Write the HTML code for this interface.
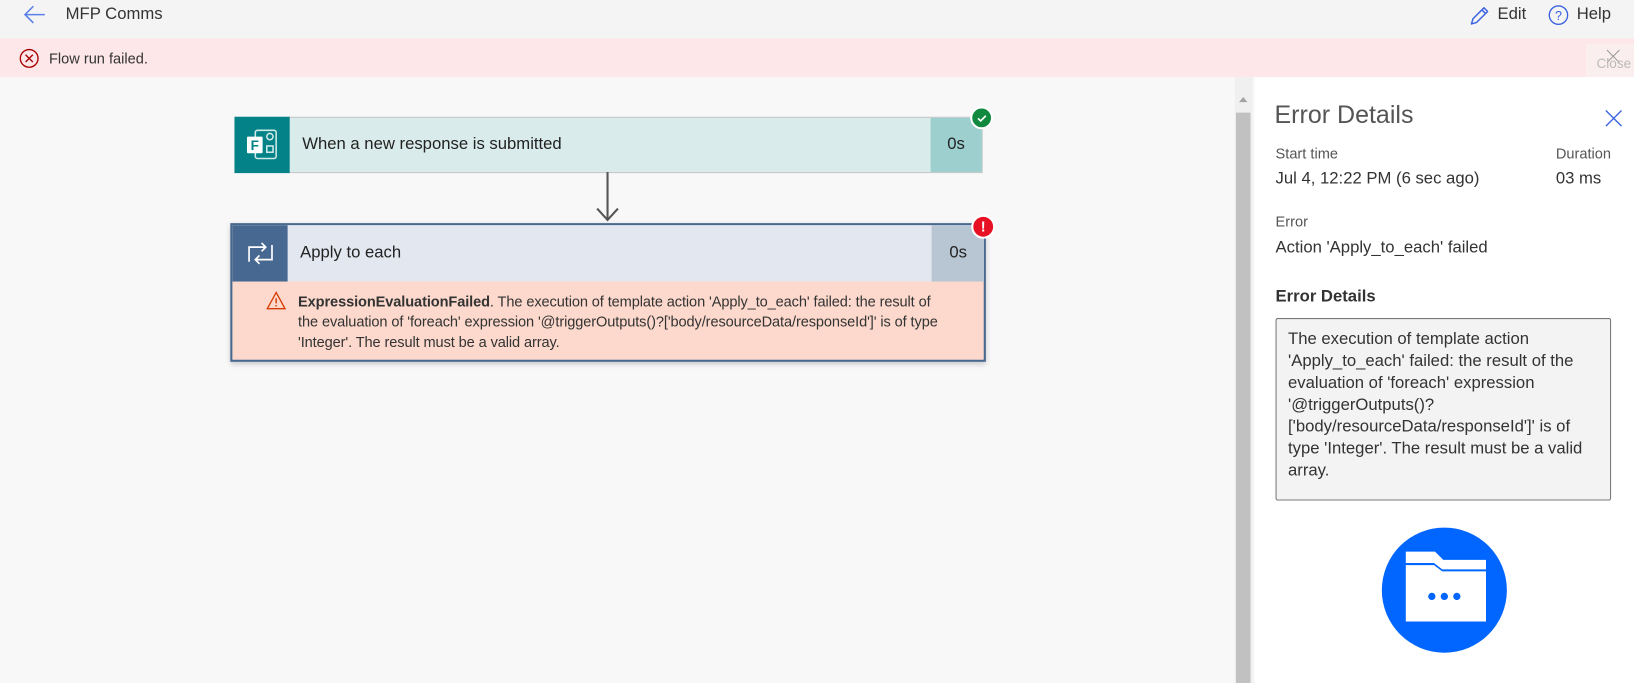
<!DOCTYPE html>
<html><head><meta charset="utf-8"><style>
html,body{margin:0;padding:0;width:1634px;height:683px;overflow:hidden;background:#f8f8f8;font-family:"Segoe UI","Liberation Sans",sans-serif;}
#w{position:absolute;left:0;top:0;width:1568px;height:655px;transform:scale(1.0421,1.0427);transform-origin:0 0;background:#f8f8f8;}
.a{position:absolute;}
.t{position:absolute;white-space:nowrap;}
</style></head><body><div id="w">
<div class="a" style="left:0;top:0;width:1568px;height:37px;background:#f4f4f4"></div>
<svg class="a" style="left:21px;top:4px" width="24" height="20" viewBox="0 0 24 20"><path d="M22 10H3M11 2L3 10l8 8" fill="none" stroke="#5b7fe8" stroke-width="1.5"/></svg>
<div class="t" style="left:63px;top:5px;font-size:16px;color:#333">MFP Comms</div>
<svg class="a" style="left:1409px;top:4px" width="22" height="22" viewBox="0 0 22 22"><path d="M3 19l1.5-5L15 3.5l3.5 3.5L8 17.5z M13 5.5l3.5 3.5 M3 19l5-1.5" fill="none" stroke="#3a62e0" stroke-width="1.4" stroke-linejoin="round"/></svg>
<div class="t" style="left:1437px;top:5px;font-size:16px;color:#333">Edit</div>
<svg class="a" style="left:1485px;top:4px" width="21" height="21" viewBox="0 0 21 21"><circle cx="10.5" cy="10.5" r="8.8" fill="none" stroke="#3a62e0" stroke-width="1.3"/><text x="10.5" y="15" text-anchor="middle" font-size="12" fill="#3a62e0" font-family="Liberation Sans">?</text></svg>
<div class="t" style="left:1513px;top:5px;font-size:16px;color:#333">Help</div>
<div class="a" style="left:0;top:37px;width:1568px;height:37px;background:#fde7e9"></div>
<svg class="a" style="left:18px;top:46px" width="20" height="20" viewBox="0 0 20 20"><circle cx="10" cy="10" r="8.5" fill="none" stroke="#a80000" stroke-width="1.3"/><path d="M6.5 6.5l7 7M13.5 6.5l-7 7" stroke="#a80000" stroke-width="1.3"/></svg>
<div class="t" style="left:47px;top:48px;font-size:14px;color:#333">Flow run failed.</div>
<div class="a" style="left:1522px;top:42px;width:46px;height:40px;background:#fbeeee;opacity:.9"></div>
<svg class="a" style="left:1541px;top:47px" width="14" height="14" viewBox="0 0 14 14"><path d="M1 1l12 12M13 1L1 13" stroke="#999" stroke-width="1"/></svg>
<div class="t" style="left:1532px;top:53px;font-size:13px;color:#bbb">Close</div>
<div class="a" style="left:1185px;top:74px;width:17px;height:581px;background:#f0f0f0"></div>
<div class="a" style="left:1186px;top:108px;width:14px;height:547px;background:#c1c1c1"></div>
<svg class="a" style="left:1188px;top:92px" width="10" height="8"><path d="M1 6l4-5 4 5z" fill="#a3a3a3"/></svg>
<div class="a" style="left:1204px;top:74px;width:364px;height:581px;background:#fff"></div>
<div class="t" style="left:1223px;top:97px;font-size:24px;font-weight:300;color:#555">Error Details</div>
<svg class="a" style="left:1540px;top:105px" width="17" height="17" viewBox="0 0 17 17"><path d="M1 1l15 15M16 1L1 16" stroke="#3a62e0" stroke-width="1.3"/></svg>
<div class="t" style="left:1224px;top:139px;font-size:14px;color:#555">Start time</div>
<div class="t" style="left:1493px;top:139px;font-size:14px;color:#555">Duration</div>
<div class="t" style="left:1224px;top:163px;font-size:16px;color:#333">Jul 4, 12:22 PM (6 sec ago)</div>
<div class="t" style="left:1493px;top:163px;font-size:16px;color:#333">03 ms</div>
<div class="t" style="left:1224px;top:204px;font-size:14px;color:#555">Error</div>
<div class="t" style="left:1224px;top:229px;font-size:16px;color:#333">Action 'Apply_to_each' failed</div>
<div class="t" style="left:1224px;top:276px;font-size:16px;font-weight:bold;color:#333">Error Details</div>
<div class="a" style="left:1224px;top:305px;width:322px;height:175px;background:#f3f3f3;border:1px solid #777;border-radius:2px;box-sizing:border-box;padding:9px 11px;font-size:16px;line-height:21px;color:#333">The execution of template action 'Apply_to_each' failed: the result of the evaluation of 'foreach' expression '@triggerOutputs()?['body/resourceData/responseId']' is of type 'Integer'. The result must be a valid array.</div>
<div class="a" style="left:1326px;top:506px;width:120px;height:120px;border-radius:50%;background:#0066ff"></div>
<svg class="a" style="left:1346px;top:526px" width="80" height="80" viewBox="0 0 80 80"><path d="M3 3h28l8 8h41v9H38l-8-6H3z" fill="#fff"/><path d="M3 16h27l8 6h42v48H3z" fill="#fff"/><circle cx="28" cy="46" r="3.5" fill="#0066ff"/><circle cx="40" cy="46" r="3.5" fill="#0066ff"/><circle cx="52" cy="46" r="3.5" fill="#0066ff"/></svg>
<div class="a" style="left:225px;top:112px;width:716px;height:52px;background:#d9eceb;border:1px solid #c8c8c8"></div>
<div class="a" style="left:225px;top:112px;width:53px;height:54px;background:#038387"></div>
<svg class="a" style="left:236px;top:124px" width="32" height="30" viewBox="0 0 32 30"><rect x="9" y="1" width="20" height="27" rx="2" fill="none" stroke="#cfe9e8" stroke-width="1.5"/><circle cx="23" cy="7" r="3" fill="none" stroke="#cfe9e8" stroke-width="1.5"/><rect x="20" y="16" width="6" height="6" fill="none" stroke="#cfe9e8" stroke-width="1.5"/><rect x="1" y="7" width="15" height="16" rx="1" fill="#fff"/><text x="8.5" y="20" text-anchor="middle" font-size="13" font-weight="bold" fill="#038387" font-family="Liberation Sans">F</text></svg>
<div class="t" style="left:290px;top:130px;font-size:16px;color:#222">When a new response is submitted</div>
<div class="a" style="left:893px;top:113px;width:49px;height:52px;background:#9ccfce"></div>
<div class="t" style="left:909px;top:130px;font-size:16px;color:#222">0s</div>
<div class="a" style="left:931px;top:102px;width:18px;height:18px;border-radius:50%;background:#10893e;border:2px solid #fff"></div>
<svg class="a" style="left:934px;top:105px" width="16" height="16" viewBox="0 0 16 16"><path d="M4.5 8.5l2.5 2.5 5-5" fill="none" stroke="#fff" stroke-width="1.6"/></svg>
<svg class="a" style="left:571px;top:165px" width="24" height="48" viewBox="0 0 24 48"><path d="M12 0v46M2 35l10 11 10-11" fill="none" stroke="#555" stroke-width="2"/></svg>
<div class="a" style="left:221px;top:214px;width:725px;height:133px;background:#fcd9cc;border:2px solid #476991;box-sizing:border-box;box-shadow:0 2px 5px rgba(0,0,0,.2)"></div>
<div class="a" style="left:223px;top:216px;width:721px;height:54px;background:#e3e7ef"></div>
<div class="a" style="left:223px;top:216px;width:53px;height:54px;background:#476991"></div>
<svg class="a" style="left:235px;top:231px" width="30" height="24" viewBox="0 0 30 24"><path d="M4 20V6h16M16 2l4 4-4 4M26 4v14H10M14 22l-4-4 4-4" fill="none" stroke="#fff" stroke-width="1.6"/></svg>
<div class="t" style="left:288px;top:234px;font-size:16px;color:#222">Apply to each</div>
<div class="a" style="left:894px;top:216px;width:50px;height:54px;background:#b8c5d3"></div>
<div class="t" style="left:911px;top:234px;font-size:16px;color:#222">0s</div>
<div class="a" style="left:932px;top:206px;width:19px;height:19px;border-radius:50%;background:#e81123;border:2px solid #fff;color:#fff;font:bold 14px 'Liberation Sans',sans-serif;text-align:center;line-height:19px">!</div>
<svg class="a" style="left:255px;top:279px" width="20" height="18" viewBox="0 0 20 18"><path d="M10 1.5L18.5 17H1.5z" fill="none" stroke="#d83b01" stroke-width="1.3"/><path d="M10 7v5M10 13.5v1.5" stroke="#d83b01" stroke-width="1.4"/></svg>
<div class="a" style="left:286px;top:280px;width:628px;font-size:14px;line-height:19.3px;color:#333;letter-spacing:-0.1px"><b>ExpressionEvaluationFailed</b>. The execution of template action 'Apply_to_each' failed: the result of the evaluation of 'foreach' expression '@triggerOutputs()?['body/resourceData/responseId']' is of type 'Integer'. The result must be a valid array.</div>
</div></body></html>
